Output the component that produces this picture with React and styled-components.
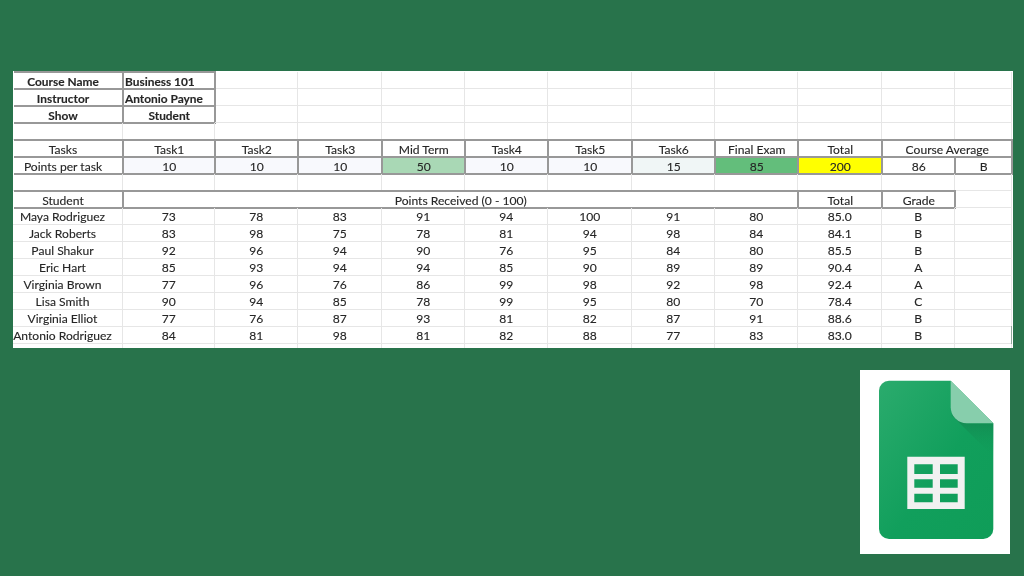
import React from "react";
import styled, { createGlobalStyle } from "styled-components";

const Global = createGlobalStyle`
  html, body { margin: 0; padding: 0; background: #28734b; }
`;

const Page = styled.div`
  width: 1024px;
  height: 576px;
  box-sizing: border-box;
  padding: 71px 11px 0 13px;
  display: flex;
  flex-direction: column;
  overflow: hidden;
  background: #28734b;
`;

const Sheet = styled.div`
  display: grid;
  grid-template-columns: 110px 92px 83px 84px 83px 83px 84px 83px 83px 84px 73px 57px;
  grid-auto-rows: 17px;
  width: 1000px;
  box-sizing: border-box;
  height: 277px;
  padding: 1px 1px 0 0;
  background: #fff;
  overflow: hidden;
  filter: blur(0.4px);
  font-family: "Lato", "Liberation Sans", sans-serif;
  font-size: 12.1px;
  color: #262626;
  -webkit-text-stroke: 0.12px #262626;
`;

const Cell = styled.div`
  box-sizing: border-box;
  display: flex;
  align-items: center;
  justify-content: ${(p) => (p.$left ? "flex-start" : "center")};
  padding: 1px ${(p) => (p.$first ? "10px" : "0")} 0 ${(p) => (p.$left ? "2px" : p.$first ? "0" : "0.5px")};
  grid-column: span ${(p) => p.$span || 1};
  font-weight: ${(p) => (p.$bold ? 700 : 400)};
  font-size: ${(p) => (p.$bold ? "11.9px" : "inherit")};
  background: ${(p) => p.$fill || "transparent"};
  white-space: nowrap;
  position: relative;
  ${(p) =>
    p.$box
      ? "outline: 2px solid #989898; outline-offset: -1px;"
      : "border-right: 1px solid #e6e6e6; border-bottom: 1px solid #e6e6e6;"}
  ${(p) => p.$box && p.$first && "clip-path: inset(-2px -2px -2px 1px);"}
`;

const SelectionEdge = styled.span`
  position: absolute;
  right: -1px;
  top: -1px;
  bottom: -1px;
  width: 1.5px;
  background: #8fa89a;
`;

const LogoCard = styled.div`
  align-self: flex-end;
  width: 149.5px;
  height: 184px;
  margin-top: 22px;
  margin-right: 3.5px;
  background: #fff;
  display: flex;
  filter: blur(0.3px);
`;

const LogoSvg = styled.svg`
  width: 100%;
  height: 100%;
  display: block;
`;

const blank = (n, key) =>
  Array.from({ length: n }, (_, i) => <Cell key={`${key}-${i}`} />);

const tasks = ["Task1", "Task2", "Task3", "Mid Term", "Task4", "Task5", "Task6", "Final Exam", "Total"];
const points = [
  ["10", "#f8f9fd"], ["10", "#f8f9fd"], ["10", "#f8f9fd"], ["50", "#a9d8b5"],
  ["10", "#f8f9fd"], ["10", "#f8f9fd"], ["15", "#f0f6f6"], ["85", "#63be7b"], ["200", "#ffff00"],
];
const students = [
  ["Maya Rodriguez", 73, 78, 83, 91, 94, 100, 91, 80, "85.0", "B"],
  ["Jack Roberts", 83, 98, 75, 78, 81, 94, 98, 84, "84.1", "B"],
  ["Paul Shakur", 92, 96, 94, 90, 76, 95, 84, 80, "85.5", "B"],
  ["Eric Hart", 85, 93, 94, 94, 85, 90, 89, 89, "90.4", "A"],
  ["Virginia Brown", 77, 96, 76, 86, 99, 98, 92, 98, "92.4", "A"],
  ["Lisa Smith", 90, 94, 85, 78, 99, 95, 80, 70, "78.4", "C"],
  ["Virginia Elliot", 77, 76, 87, 93, 81, 82, 87, 91, "88.6", "B"],
  ["Antonio Rodriguez", 84, 81, 98, 81, 82, 88, 77, 83, "83.0", "B"],
];
const info = [
  ["Course Name", "Business 101", true],
  ["Instructor", "Antonio Payne", true],
  ["Show", "Student", false],
];

function SheetsLogo() {
  return (
    <LogoSvg viewBox="0 0 149.5 184">
      <defs>
        <linearGradient id="body" x1="0" y1="0" x2="1" y2="1">
          <stop offset="0" stopColor="#2bab6d" />
          <stop offset="0.55" stopColor="#119f5c" />
          <stop offset="1" stopColor="#0f9d58" />
        </linearGradient>
        <linearGradient id="shade" x1="0" y1="0" x2="0" y2="1">
          <stop offset="0" stopColor="#17794b" stopOpacity="0.7" />
          <stop offset="1" stopColor="#0f9d58" stopOpacity="0" />
        </linearGradient>
      </defs>
      <path
        d="M29 10.7H90.7L133.3 53.3V159A10 10 0 0 1 123.3 169H29A10 10 0 0 1 19 159V20.7A10 10 0 0 1 29 10.7Z"
        fill="url(#body)"
      />
      <path d="M91 44.5L133.3 86.7V53.3H106.7Z" fill="url(#shade)" />
      <path d="M90.7 10.7V37.3A16 16 0 0 0 106.7 53.3H133.3Z" fill="#87ceac" />
      <path
        fillRule="evenodd"
        fill="#f1f1f1"
        d="M47.3 86.7H104.7V139H47.3ZM54.3 94.3V104H72.7V94.3ZM80 94.3V104H97.7V94.3ZM54.3 109.3V117.7H72.7V109.3ZM80 109.3V117.7H97.7V109.3ZM54.3 123.7V132.3H72.7V123.7ZM80 123.7V132.3H97.7V123.7Z"
      />
    </LogoSvg>
  );
}

export default function App() {
  return (
    <Page>
      <Global />
      <Sheet>
        {info.map(([label, value, left]) => (
          <React.Fragment key={label}>
            <Cell $box $bold $first>{label}</Cell>
            <Cell $box $bold $left={left}>{value}</Cell>
            {blank(10, label)}
          </React.Fragment>
        ))}
        {blank(12, "gap1")}

        <Cell $box $first>Tasks</Cell>
        {tasks.map((t) => <Cell $box key={t}>{t}</Cell>)}
        <Cell $box $span={2}>Course Average</Cell>

        <Cell $box $first>Points per task</Cell>
        {points.map(([v, fill], i) => <Cell $box $fill={fill} key={i}>{v}</Cell>)}
        <Cell $box>86</Cell>
        <Cell $box>B</Cell>

        {blank(12, "gap2")}

        <Cell $box $first>Student</Cell>
        <Cell $box $span={8}>Points Received (0 - 100)</Cell>
        <Cell $box>Total</Cell>
        <Cell $box>Grade</Cell>
        <Cell />

        {students.map((row, r) => (
          <React.Fragment key={row[0]}>
            {row.map((v, i) => <Cell key={i} $first={i === 0}>{v}</Cell>)}
            <Cell>{r === students.length - 1 && <SelectionEdge />}</Cell>
          </React.Fragment>
        ))}
        {blank(12, "tail")}
      </Sheet>
      <LogoCard>
        <SheetsLogo />
      </LogoCard>
    </Page>
  );
}
